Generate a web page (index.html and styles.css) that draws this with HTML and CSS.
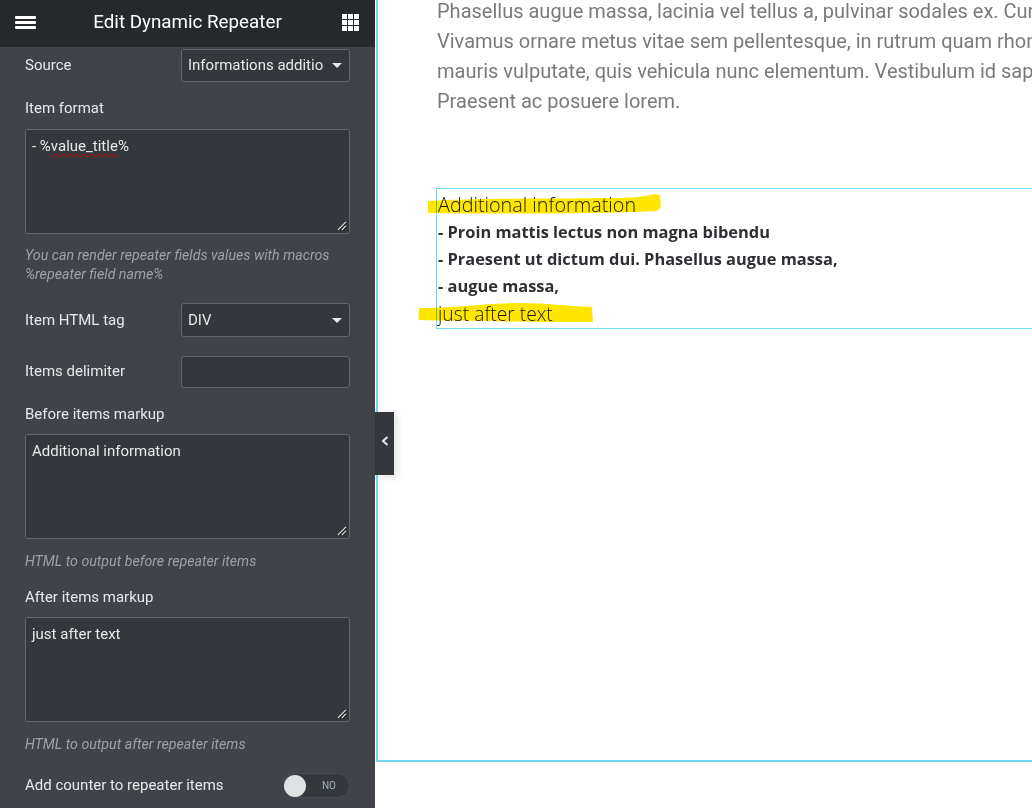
FILE: index.html
```html
<!DOCTYPE html>
<html lang="en">
<head>
<meta charset="utf-8">
<title>Edit Dynamic Repeater</title>
<link rel="stylesheet" href="styles.css">
</head>
<body>
<aside class="panel">
  <header class="panel-head">
    <span class="burger"><i></i><i></i><i></i></span>
    <h1 class="panel-title">Edit Dynamic Repeater</h1>
    <span class="apps"><i></i><i></i><i></i><i></i><i></i><i></i><i></i><i></i><i></i></span>
  </header>
  <div class="controls">
    <div class="row row-source">
      <span class="label label-high">Source</span>
      <div class="select"><span class="select-text select-text-high">Informations additio</span><span class="caret"></span></div>
    </div>
    <div class="label block first-label">Item format</div>
    <div class="area area-first">- %<span class="squiggle">value_title</span>%
      <svg class="grip" width="10" height="10" viewBox="0 0 10 10"><path d="M1 9 9 1M5 9 9 5" stroke="#d8d8d8" stroke-width="1.4" fill="none"/><path d="M2 9.500 9.500 2M6 9.500 9.500 6" stroke="#111" stroke-width="1" fill="none"/></svg>
    </div>
    <p class="help help-first">You can render repeater fields values with macros %repeater field name%</p>
    <div class="row row-tag">
      <span class="label">Item HTML tag</span>
      <div class="select select-tall"><span class="select-text">DIV</span><span class="caret"></span></div>
    </div>
    <div class="row row-delim">
      <span class="label label-high">Items delimiter</span>
      <div class="select select-plain"></div>
    </div>
    <div class="label block">Before items markup</div>
    <div class="area">Additional information
      <svg class="grip" width="10" height="10" viewBox="0 0 10 10"><path d="M1 9 9 1M5 9 9 5" stroke="#d8d8d8" stroke-width="1.4" fill="none"/><path d="M2 9.500 9.500 2M6 9.500 9.500 6" stroke="#111" stroke-width="1" fill="none"/></svg>
    </div>
    <p class="help">HTML to output before repeater items</p>
    <div class="label block after-label">After items markup</div>
    <div class="area">just after text
      <svg class="grip" width="10" height="10" viewBox="0 0 10 10"><path d="M1 9 9 1M5 9 9 5" stroke="#d8d8d8" stroke-width="1.4" fill="none"/><path d="M2 9.500 9.500 2M6 9.500 9.500 6" stroke="#111" stroke-width="1" fill="none"/></svg>
    </div>
    <p class="help">HTML to output after repeater items</p>
    <div class="row row-switch">
      <span class="label label-high">Add counter to repeater items</span>
      <div class="switch"><span class="knob"></span><span class="switch-text">NO</span></div>
    </div>
  </div>
</aside>
<main class="stage">
  <div class="frame">
    <div class="lorem">
      <p>Phasellus augue massa, lacinia vel tellus a, pulvinar sodales ex. Curabitur</p>
      <p>Vivamus ornare metus vitae sem pellentesque, in rutrum quam rhoncus.</p>
      <p>mauris vulputate, quis vehicula nunc elementum. Vestibulum id sapien</p>
      <p>Praesent ac posuere lorem.</p>
    </div>
    <div class="widget">
      <div class="plain plain-top">Additional information</div>
      <div class="item">- Proin mattis lectus non magna bibendu</div>
      <div class="item">- Praesent ut dictum dui. Phasellus augue massa,</div>
      <div class="item">- augue massa,</div>
      <div class="plain plain-end">just after text</div>
    </div>
  </div>
  <svg class="marker" width="250" height="140" viewBox="0 0 250 140">
    <path d="M12 11 C60 8 130 9 195 8 C215 8 228 7 239 4 L244 5 L245 17 L241 21 C180 24 90 24 12 23 Z" fill="#ffe600"/>
    <path d="M3 118 C40 118 70 113 105 113 C130 113 150 116 176 117 L177 132 C120 132 60 131 3 130 Z" fill="#ffe600"/>
  </svg>
  <button class="collapse" type="button" aria-label="Collapse panel">
    <svg width="8" height="10" viewBox="0 0 8 10"><path d="M6.500 1 2 5l4.500 4" stroke="#e6e8ea" stroke-width="2" fill="none"/></svg>
  </button>
</main>
</body>
</html>
```
FILE: styles.css
```css
* { box-sizing: border-box; }
html, body { margin: 0; height: 100%; }
body {
  display: flex;
  width: 1032px;
  height: 808px;
  overflow: hidden;
  background: #fff;
  font-family: Roboto, "Liberation Sans", sans-serif;
}

/* panel */
.panel {
  flex: 0 0 375px;
  height: 808px;
  background: #404349;
  color: #e6e8ea;
  overflow: hidden;
}
.panel-head {
  height: 47px;
  background: #26292c;
  display: flex;
  align-items: center;
  justify-content: space-between;
  padding: 0 16px 0 15px;
}
.panel-title {
  margin: 0 3px 3px 0;
  font-size: 18.800px;
  font-weight: 400;
  color: #fff;
  line-height: 24px;
}
.burger { display: flex; flex-direction: column; gap: 2px; width: 21px; margin-bottom: 3px; }
.burger i { display: block; height: 3px; background: #fff; border-radius: 1px; }
.apps { display: grid; grid-template-columns: repeat(3, 5px); grid-auto-rows: 5px; gap: 1px; margin-bottom: 3px; }
.apps i { display: block; background: #fff; }

.controls { padding: 2px 25px 0; }
.row { display: flex; align-items: center; justify-content: space-between; }
.label { font-size: 15px; line-height: 20px; color: #e6e8ea; }
.label-high { padding-bottom: 2px; }
.block { display: block; margin-top: 17px; line-height: 18px; padding-bottom: 2px; }
.first-label { margin-top: 17px; }
.select {
  width: 169px;
  height: 33px;
  display: flex;
  align-items: center;
  justify-content: space-between;
  padding: 0 7px 0 6px;
  background: #34383c;
  border: 1px solid #64666a;
  border-radius: 3px;
  font-size: 15px;
  color: #e6e8ea;
}
.select-text { white-space: nowrap; overflow: hidden; }
.select-text-high { padding-bottom: 2px; }
.select-tall { height: 34px; }
.select-plain { height: 32px; }
.caret {
  width: 0;
  height: 0;
  border-left: 5px solid transparent;
  border-right: 5px solid transparent;
  border-top: 5px solid #e6e8ea;
}
.row-tag { margin-top: 19px; }
.row-delim { margin-top: 19px; }
.area {
  position: relative;
  height: 105px;
  margin-top: 9px;
  padding: 6px 6px;
  background: #34383c;
  border: 1px solid #64666a;
  border-radius: 3px;
  font-size: 15px;
  line-height: 20px;
  color: #e6e8ea;
}
.area-first { margin-top: 10px; }
.squiggle { text-decoration: underline wavy #e00000 1px; text-underline-offset: 2px; }
.grip { position: absolute; right: 2px; bottom: 2px; }
.help {
  margin: 13px 0 0;
  font-size: 14.200px;
  font-style: italic;
  line-height: 19px;
  color: #9ea2a8;
}
.help-first { margin-top: 12px; }
.row-switch { margin-top: 19px; height: 25px; }
.switch {
  width: 67px;
  height: 25px;
  display: flex;
  align-items: center;
  justify-content: space-between;
  padding: 0 13px 0 0;
  background: #34383c;
  border: 1px solid #494c51;
  border-radius: 13px;
}
.knob { width: 22px; height: 22px; border-radius: 50%; background: #e0e1e3; }
.switch-text { font-size: 10px; color: #a4afb7; }

/* stage */
.stage {
  position: relative;
  flex: 1;
  height: 808px;
  padding-left: 1px;
  overflow: hidden;
}
.frame {
  height: 762px;
  border-left: 2px solid #71d7f7;
  border-bottom: 2px solid #71d7f7;
  overflow: hidden;
}
.lorem {
  margin-top: -4px;
  padding-left: 59px;
  font-size: 20px;
  line-height: 30px;
  color: #7a7a7a;
  white-space: nowrap;
}
.lorem p { margin: 0; }
.widget {
  margin: 72px 0 0 58px;
  height: 141px;
  padding: 3px 0 0 1px;
  border: 1px solid #71d7f7;
  border-right: 0;
  font-family: "Open Sans", sans-serif;
  color: #2d2f33;
  white-space: nowrap;
}
.plain { font-size: 19.300px; line-height: 27px; font-weight: 300; color: #1c1e21; }
.plain-top { font-size: 19.800px; line-height: 26px; }
.plain-end { margin-top: 1px; }
.item { font-size: 16.400px; font-weight: 700; line-height: 27px; }
.marker {
  position: absolute;
  left: 41px;
  top: 190px;
  mix-blend-mode: multiply;
}
.collapse {
  position: absolute;
  left: 0;
  top: 412px;
  width: 19px;
  height: 63px;
  display: flex;
  align-items: center;
  justify-content: center;
  padding: 0 0 5px;
  border: 0;
  background: #34383c;
  box-shadow: 3px 2px 8px rgba(0, 0, 0, .12);
}
```
